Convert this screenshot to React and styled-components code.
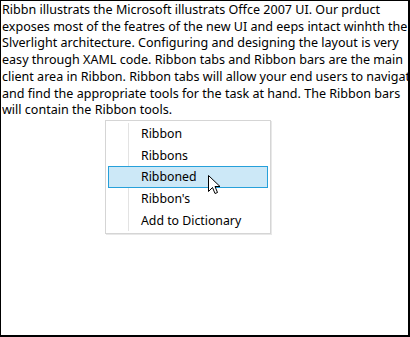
import React from "react";
import styled, { createGlobalStyle } from "styled-components";

const Global = createGlobalStyle`
  html, body { margin: 0; padding: 0; background: #fff; }
  body { font-family: "Noto Sans", "Open Sans", sans-serif; }
`;

const Frame = styled.div`
  position: relative;
  box-sizing: border-box;
  width: 410px;
  height: 337px;
  border: 1px solid #000;
  border-right-width: 2px;
  border-bottom-width: 2px;
  background: #fff;
  overflow: hidden;
`;

const Editor = styled.div`
  padding: 1px 0 0 1px;
  font-family: "Segoe UI", "Noto Sans", sans-serif;
  font-size: 12.55px;
  line-height: 16.7px;
  color: #000;
`;

const Line = styled.div`
  white-space: nowrap;
  overflow: hidden;
`;

const Menu = styled.div`
  position: absolute;
  left: 104px;
  top: 119px;
  width: 166px;
  box-sizing: border-box;
  padding: 2px;
  background: #fff;
  border: 1px solid #d5d5d5;
  box-shadow: 1px 1px 0 #e8e8e8;
  display: flex;
  flex-direction: column;
  font-family: "Segoe UI", "Noto Sans", sans-serif;
  font-size: 12.3px;
  color: #000;
  &::before {
    content: "";
    position: absolute;
    left: 22px;
    top: 2px;
    bottom: 2px;
    width: 1px;
    background: #e3e3e3;
  }
`;

const Item = styled.div`
  position: relative;
  box-sizing: border-box;
  height: 21.6px;
  display: flex;
  align-items: center;
  padding-left: 32px;
  border: 1px solid ${(p) => (p.$active ? "#26a0da" : "transparent")};
  background: ${(p) => (p.$active ? "#cce8f7" : "transparent")};
`;

const Cursor = styled.svg`
  position: absolute;
  left: 207px;
  top: 174px;
`;

const lines = [
  "Ribbn illustrats the Microsoft illustrats Offce 2007 UI. Our prduct",
  "exposes most of the featres of the new UI and eeps intact winhth the",
  "Slverlight architecture. Configuring and designing the layout is very",
  "easy through XAML code. Ribbon tabs and Ribbon bars are the main",
  "client area in Ribbon. Ribbon tabs will allow your end users to navigate",
  "and find the appropriate tools for the task at hand. The Ribbon bars",
  "will contain the Ribbon tools.",
];

const items = ["Ribbon", "Ribbons", "Ribboned", "Ribbon's", "Add to Dictionary"];

export default function App() {
  return (
    <>
      <Global />
      <Frame>
        <Editor>
          {lines.map((l, i) => (
            <Line key={i}>{l}</Line>
          ))}
        </Editor>
        <Menu>
          {items.map((t) => (
            <Item key={t} $active={t === "Ribboned"}>
              {t}
            </Item>
          ))}
        </Menu>
        <Cursor width="13" height="20" viewBox="0 0 13 20">
          <path
            d="M0.5 0.5 L0.5 16.5 L4.5 12.5 L7 18.5 L9.5 17.5 L7 11.5 L12 11.5 Z"
            fill="#fff"
            stroke="#000"
            strokeWidth="1"
            strokeLinejoin="miter"
          />
        </Cursor>
      </Frame>
    </>
  );
}
